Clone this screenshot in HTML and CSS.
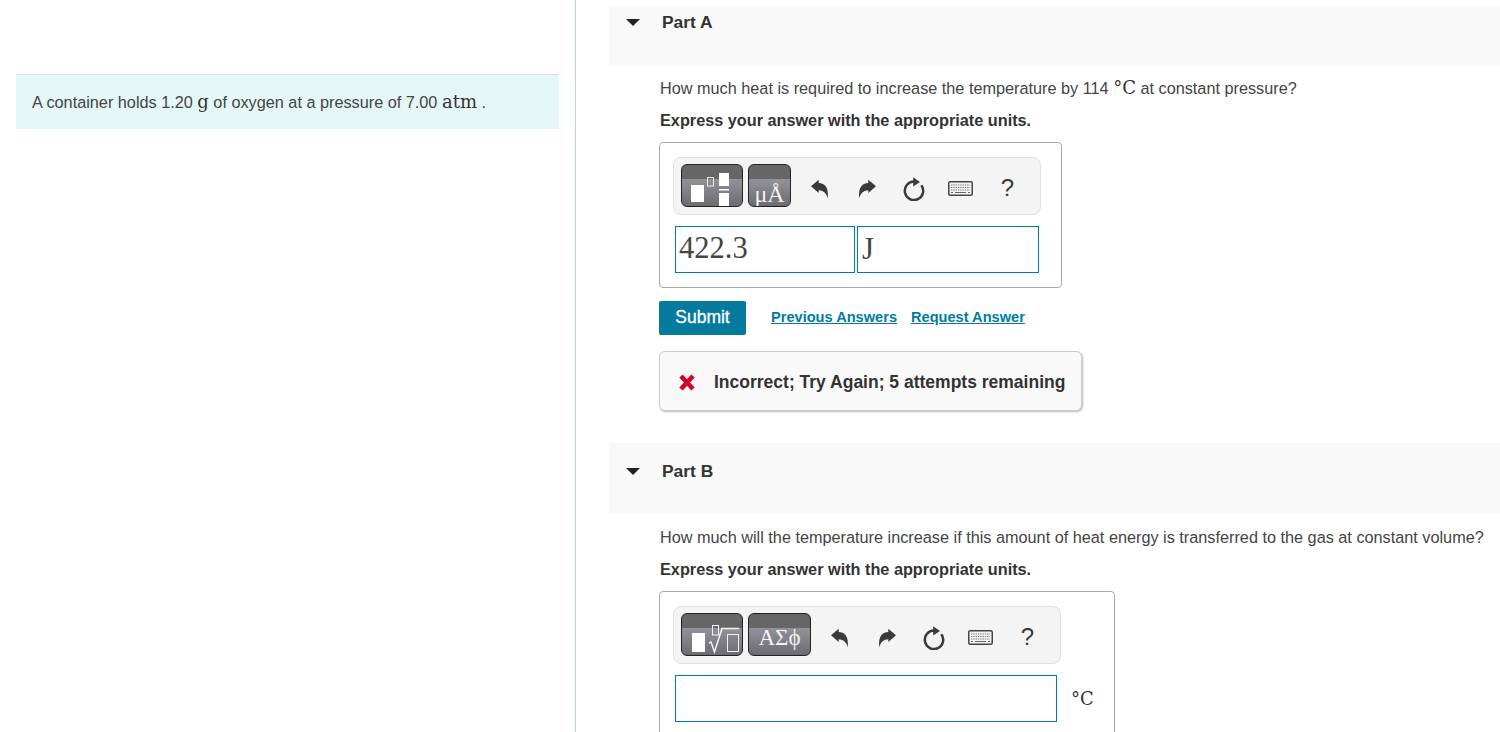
FILE: index.html
```html
<!DOCTYPE html>
<html lang="en">
<head>
    <meta charset="UTF-8">
    <title>Part A and Part B</title>
    <link rel="stylesheet" href="styles.css">
</head>
<body>
    <svg class="icon-defs" width="0" height="0">
        <symbol id="i-undo" viewBox="0 0 18 20">
            <path d="M0 7.3 L7.7 0.7 V4 C13 4 18 7.5 16.7 19.5 C15.5 14 12 11.3 7.7 11.3 V14 Z" fill="#3a3a3a"/>
        </symbol>
        <symbol id="i-redo" viewBox="0 0 18 20">
            <path d="M18 7.3 L10.3 0.7 V4 C5 4 0 7.5 1.3 19.5 C2.5 14 6 11.3 10.3 11.3 V14 Z" fill="#3a3a3a"/>
        </symbol>
        <symbol id="i-reset" viewBox="0 0 22 24">
            <path d="M11 4.6 A9.2 9.2 0 1 0 18.3 8.2" fill="none" stroke="#3a3a3a" stroke-width="2.5"/>
            <path d="M10.2 0.3 L17 5 L10.2 9.6 Z" fill="#3a3a3a"/>
        </symbol>
        <symbol id="i-keys" viewBox="0 0 25 15">
            <rect x="0.75" y="0.75" width="23.5" height="13.5" rx="1.5" fill="#f4f4f4" stroke="#444" stroke-width="1.5"/>
            <path d="M3 4 H22 M3 6.5 H22 M3 9 H22" stroke="#777" stroke-width="1.2" stroke-dasharray="1.4 0.9"/>
            <path d="M3 11.5 H5 M7 11.5 H18 M20 11.5 H22" stroke="#666" stroke-width="1.2"/>
        </symbol>
    </svg>

    <div class="page">
        <div class="left-col">
            <div class="intro">
                A container holds 1.20 <span class="math">g</span> of oxygen at a pressure of 7.00 <span class="math">atm</span> .
            </div>
        </div>

        <div class="right-col">
            <div class="part-head">
                <span class="caret"></span>
                <span class="part-title">Part A</span>
            </div>
            <div class="part-body">
                <p class="question">How much heat is required to increase the temperature by 114 <span class="math">°C</span> at constant pressure?</p>
                <p class="express">Express your answer with the appropriate units.</p>

                <div class="answer-box">
                    <div class="toolbar">
                        <div class="tool-btn tool-wide">
                            <svg width="62" height="43" viewBox="0 0 62 43">
                                <rect x="10" y="21" width="13" height="17" fill="#fff"/>
                                <rect x="26.5" y="13.5" width="6" height="8.5" fill="none" stroke="#e8e8e8"/>
                                <rect x="38" y="9" width="10" height="13" fill="#fff"/>
                                <rect x="38" y="25" width="10" height="1.5" fill="#fff"/>
                                <rect x="38" y="29" width="10" height="13" fill="#fff"/>
                            </svg>
                        </div>
                        <div class="tool-btn tool-sym">μÅ</div>
                        <div class="tool-icon"><svg width="18" height="20"><use href="#i-undo"/></svg></div>
                        <div class="tool-icon"><svg width="18" height="20"><use href="#i-redo"/></svg></div>
                        <div class="tool-icon"><svg width="22" height="24"><use href="#i-reset"/></svg></div>
                        <div class="tool-icon"><svg width="25" height="15"><use href="#i-keys"/></svg></div>
                        <div class="tool-icon tool-help">?</div>
                    </div>
                    <div class="input-row">
                        <div class="field field-value">422.3</div>
                        <div class="field field-unit">J</div>
                    </div>
                </div>

                <div class="actions">
                    <div class="submit">Submit</div>
                    <a class="action-link" href="#">Previous Answers</a>
                    <a class="action-link" href="#">Request Answer</a>
                </div>

                <div class="feedback">
                    <svg class="feedback-x" width="18" height="17" viewBox="0 0 18 17">
                        <path d="M3 2 L15 15 M15 2 L3 15" stroke="#d9002b" stroke-width="4.6"/>
                    </svg>
                    <span>Incorrect; Try Again; 5 attempts remaining</span>
                </div>
            </div>

            <div class="part-head part-head-b">
                <span class="caret"></span>
                <span class="part-title">Part B</span>
            </div>
            <div class="part-body">
                <p class="question">How much will the temperature increase if this amount of heat energy is transferred to the gas at constant volume?</p>
                <p class="express">Express your answer with the appropriate units.</p>

                <div class="answer-box">
                    <div class="toolbar">
                        <div class="tool-btn tool-wide">
                            <svg width="62" height="43" viewBox="0 0 62 43">
                                <rect x="11" y="20" width="13" height="19" fill="#fff"/>
                                <rect x="31.5" y="12.5" width="6" height="9.5" fill="none" stroke="#f0f0f0"/>
                                <path d="M28 30 L30 29 L33.5 39 L41 15.5 H58" fill="none" stroke="#f4f4f4" stroke-width="1.5"/>
                                <rect x="46.5" y="21.5" width="11" height="17" fill="none" stroke="#f0f0f0"/>
                            </svg>
                        </div>
                        <div class="tool-btn tool-sym tool-sym-wide">ΑΣϕ</div>
                        <div class="tool-icon"><svg width="18" height="20"><use href="#i-undo"/></svg></div>
                        <div class="tool-icon"><svg width="18" height="20"><use href="#i-redo"/></svg></div>
                        <div class="tool-icon"><svg width="22" height="24"><use href="#i-reset"/></svg></div>
                        <div class="tool-icon"><svg width="25" height="15"><use href="#i-keys"/></svg></div>
                        <div class="tool-icon tool-help">?</div>
                    </div>
                    <div class="input-row">
                        <div class="field field-long"></div>
                        <div class="unit-label math">°C</div>
                    </div>
                </div>
            </div>
        </div>
    </div>
</body>
</html>
```

FILE: styles.css
```css
html, body {
    margin: 0;
    padding: 0;
    height: 732px;
    overflow: hidden;
    background-color: #fff;
    color: #444;
    font-family: "Liberation Sans", Arial, sans-serif;
    font-size: 16.25px;
}

.icon-defs {
    position: absolute;
}

.page {
    display: flex;
    height: 732px;
}

.left-col {
    width: 543px;
    padding: 74px 16px 0;
    border-right: 1px solid #c3d0e2;
    flex-shrink: 0;
}

.intro {
    height: 54px;
    padding-left: 16px;
    line-height: 54px;
    background-color: #e5f6f6;
    border-top: 1px solid #dde4e4;
}

.math {
    font-family: "DejaVu Serif", "Liberation Serif", serif;
    font-size: 18px;
    line-height: 1;
    color: #333;
}

.right-col {
    flex: 1;
    padding: 7px 0 0 33px;
    overflow: hidden;
}

.part-head {
    display: flex;
    height: 58px;
    background-color: #f9f9f9;
}

.part-head-b {
    padding-top: 13px;
    margin-top: 32px;
}

.caret {
    width: 0;
    height: 0;
    margin: 12px 0 0 17px;
    border-left: 7px solid transparent;
    border-right: 7px solid transparent;
    border-top: 7px solid #222;
}

.part-title {
    margin-left: 22px;
    font-size: 17.4px;
    line-height: 30px;
    font-weight: bold;
    color: #333;
}

.part-body {
    padding-left: 50px;
}

.question {
    margin: 12px 0 0 1px;
    line-height: 22px;
    white-space: nowrap;
}

.express {
    margin: 10px 0 0 1px;
    line-height: 22px;
    font-weight: bold;
    color: #333;
}

.answer-box {
    display: inline-block;
    margin-top: 11px;
    padding: 14px 20px 14px 13px;
    border: 1px solid #aaa;
    border-radius: 4px;
    vertical-align: top;
}

.toolbar {
    display: flex;
    width: max-content;
    height: 44px;
    padding: 6px 9px 6px 7px;
    background-color: #f4f4f4;
    border: 1px solid #e0e0e0;
    border-radius: 8px;
}

.tool-btn {
    box-sizing: border-box;
    height: 43px;
    margin-right: 5px;
    background: linear-gradient(#666 0, #666 33%, #94939b 33%, #6c6b70 100%);
    border: 1px solid #222;
    border-radius: 6px;
    overflow: hidden;
}

.tool-wide {
    width: 62px;
}

.tool-wide svg {
    display: block;
    margin: -1px 0 0 -1px;
}

.tool-sym {
    width: 43px;
    padding-top: 14px;
    text-align: center;
    font-family: "Liberation Serif", serif;
    font-size: 24px;
    line-height: 30px;
    color: #f2f2f2;
}

.tool-sym-wide {
    width: 63px;
    padding-top: 9px;
    font-size: 23px;
}

.tool-icon {
    display: flex;
    box-sizing: border-box;
    width: 47px;
    height: 44px;
    padding-top: 5px;
    align-items: center;
    justify-content: center;
}

.tool-help {
    padding-top: 4px;
    font-size: 24px;
    color: #3a3a3a;
}

.input-row {
    display: flex;
    margin: 11px 0 0 2px;
}

.field {
    box-sizing: border-box;
    height: 47px;
    padding-left: 3px;
    border: 1px solid #007c9e;
    font-family: "Liberation Serif", serif;
    font-size: 30.5px;
    line-height: 43px;
    color: #444;
}

.field-value {
    width: 180px;
    margin-right: 2px;
}

.field-unit {
    width: 182px;
    padding-left: 4px;
    line-height: 45px;
}

.field-long {
    width: 382px;
}

.unit-label {
    margin-left: 14px;
    line-height: 47px;
}

.actions {
    display: flex;
    align-items: center;
    margin-top: 13px;
}

.submit {
    width: 87px;
    height: 34px;
    line-height: 33px;
    text-align: center;
    background-color: #047a9c;
    border-radius: 2px;
    color: #fff;
    font-size: 17.5px;
    -webkit-text-stroke: 0.3px #fff;
}

.action-link {
    margin: -2px 0 0 25px;
    font-size: 14.6px;
    font-weight: bold;
    color: #007c9e;
}

.action-link + .action-link {
    margin-left: 14px;
}

.feedback {
    display: flex;
    box-sizing: border-box;
    width: 423px;
    height: 60px;
    margin-top: 16px;
    padding: 2px 0 0 18px;
    align-items: center;
    background-color: #f9f9f9;
    border: 1px solid #ccc;
    border-radius: 6px;
    box-shadow: 1px 1px 2px #bbb;
    font-size: 17.5px;
    font-weight: bold;
    color: #333;
}

.feedback-x {
    margin-right: 18px;
}
```
